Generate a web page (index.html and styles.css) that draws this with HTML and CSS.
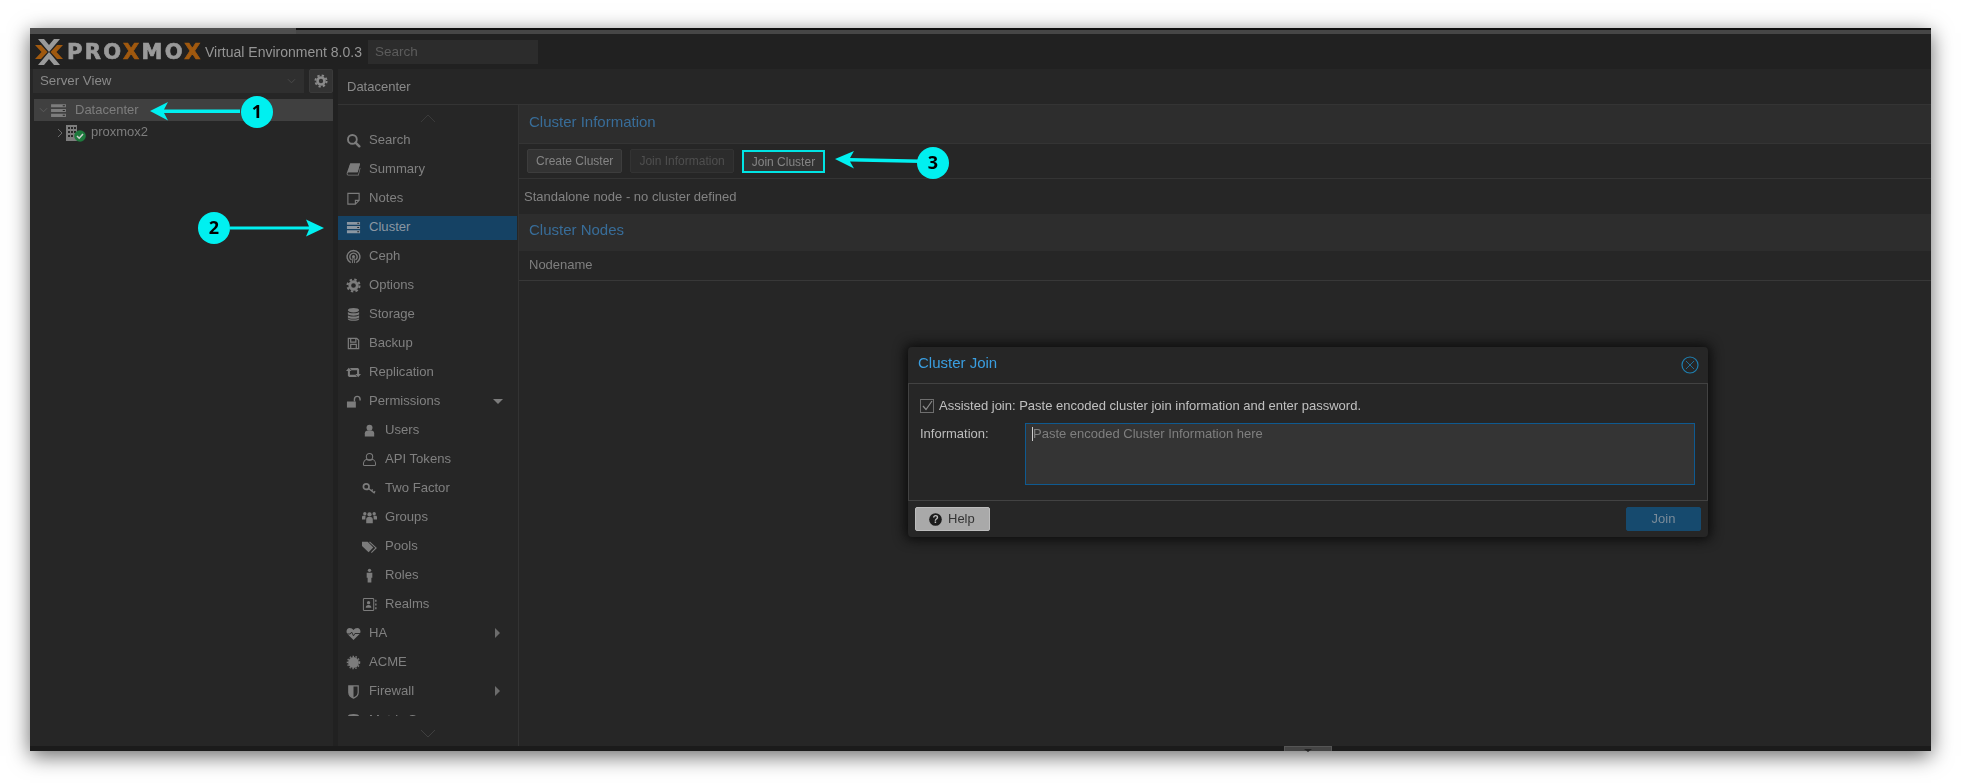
FILE: index.html
```html
<!DOCTYPE html>
<html lang="en">
<head>
<meta charset="utf-8">
<title>Proxmox Virtual Environment</title>
<link rel="stylesheet" href="styles.css">
</head>
<body>
<svg class="defs" width="0" height="0">
  <symbol id="i-search" viewBox="0 0 16 16"><circle cx="6.8" cy="6.8" r="4.7" fill="none" stroke="currentColor" stroke-width="2"/><path d="M10.2 10.2l4 4" stroke="currentColor" stroke-width="2.6" stroke-linecap="round"/></symbol>
  <symbol id="i-book" viewBox="0 0 16 16"><path d="M4.5 1.5h10.5l-2.6 9.5H2.2L1.5 12.5c0 .6.4 1 1 1h10.4l2-7.5.6.5-2 8H2.4C1 14.5 0.5 13 .8 11.8z" fill="currentColor"/><path d="M4.500 1.500h10.500l-2.600 9.500H2z" fill="currentColor"/></symbol>
  <symbol id="i-note" viewBox="0 0 16 16"><path d="M2 2.500h12v7.500l-4 4H2z M14 10h-4v4" fill="none" stroke="currentColor" stroke-width="1.200"/></symbol>
  <symbol id="i-server" viewBox="0 0 16 16"><path d="M1 2h14v3H1z M1 6.500h14v3H1z M1 11h14v3H1z" fill="currentColor"/><path d="M12 3h2v1h-2z M12 7.500h2v1h-2z M12 12h2v1h-2z" fill="#262626"/></symbol>
  <symbol id="i-ceph" viewBox="0 0 16 16"><path d="M5 14.500A6.800 6.800 0 1 1 11 14.500" fill="none" stroke="currentColor" stroke-width="1.500"/><path d="M5.900 11.600A3.900 3.900 0 1 1 10.100 11.600" fill="none" stroke="currentColor" stroke-width="1.500"/><circle cx="8" cy="8" r="1.600" fill="currentColor"/><path d="M6.800 15l.6-6h1.200l.6 6" fill="none" stroke="currentColor"/></symbol>
  <symbol id="i-gear" viewBox="0 0 16 16"><circle cx="8" cy="8" r="4" fill="none" stroke="currentColor" stroke-width="3"/><circle cx="8" cy="8" r="6.400" fill="none" stroke="currentColor" stroke-width="2.200" stroke-dasharray="2.600 2.430"/></symbol>
  <symbol id="i-db" viewBox="0 0 16 16"><ellipse cx="8" cy="3.400" rx="6" ry="2.400" fill="currentColor"/><path d="M2 5.200c1 1.800 11 1.800 12 0v2.600c-1 2-11 2-12 0z M2 8.700c1 1.800 11 1.800 12 0v2.400c-1 2-11 2-12 0z M2 11.900c1 1.800 11 1.800 12 0v1.100c-1 2.200-11 2.200-12 0z" fill="currentColor"/></symbol>
  <symbol id="i-floppy" viewBox="0 0 16 16"><path d="M2.500 2.500h9l2 2v9h-11z M5 2.500v4h5.500v-4 M5 13.500v-4.500h6v4.500" fill="none" stroke="currentColor" stroke-width="1.300"/></symbol>
  <symbol id="i-retweet" viewBox="0 0 16 16"><path d="M3 3L6 6.500H4.200V10.500H10L11.800 12.700H3.200L2 11.500V6.500H0z M13 13l-3-3.500h1.800V5.500H6L4.200 3.300h8.600L14 4.500v5h2z" fill="currentColor"/></symbol>
  <symbol id="i-unlock" viewBox="0 0 16 16"><path d="M1 8h9.500v6.500H1z" fill="currentColor"/><path d="M9 8V5.500a3 3 0 0 1 6 0V7" fill="none" stroke="currentColor" stroke-width="1.500"/></symbol>
  <symbol id="i-user" viewBox="0 0 16 16"><circle cx="8" cy="5" r="3.200" fill="currentColor"/><path d="M3 14.500V11c0-2 1.500-3 3-3h4c1.500 0 3 1 3 3v3.500z" fill="currentColor"/></symbol>
  <symbol id="i-user-o" viewBox="0 0 16 16"><circle cx="8" cy="5" r="3.400" fill="none" stroke="currentColor" stroke-width="1.100"/><path d="M3 14.500c-1 0-1.500-.5-1.500-1.500 0-2.500 1.500-5 3.500-5 1 1 5 1 6 0 2 0 3.500 2.500 3.500 5 0 1-.5 1.500-1.500 1.500z" fill="none" stroke="currentColor" stroke-width="1.100"/></symbol>
  <symbol id="i-key" viewBox="0 0 16 16"><circle cx="4.500" cy="6" r="3" fill="none" stroke="currentColor" stroke-width="1.800"/><path d="M7 8l6.500 5M10 10.500l1.500-1.500M12.500 12.500l1.500-1.500" fill="none" stroke="currentColor" stroke-width="1.500"/></symbol>
  <symbol id="i-users" viewBox="0 0 16 16"><circle cx="8" cy="4.700" r="2.300" fill="currentColor"/><circle cx="3" cy="4" r="1.800" fill="currentColor"/><circle cx="13" cy="4" r="1.800" fill="currentColor"/><path d="M4.500 14V10c0-1.500 1-2.500 2-2.500h3c1 0 2 1 2 2.500v4z M0 10V7.500C0 6.700.7 6.200 1.500 6.200h2.300L3.500 10z M16 10V7.500c0-.8-.7-1.300-1.500-1.300h-2.300l.3 3.800z" fill="currentColor"/></symbol>
  <symbol id="i-tags" viewBox="0 0 16 16"><path d="M0 3h6l6 6-5 5-7-6.500z" fill="currentColor"/><path d="M8 3l7 6.500-5 5" fill="none" stroke="currentColor" stroke-width="1.200"/></symbol>
  <symbol id="i-male" viewBox="0 0 16 16"><circle cx="8" cy="2.500" r="1.800" fill="currentColor"/><path d="M5 5h6v5.500H10v5H6v-5H5z" fill="currentColor"/></symbol>
  <symbol id="i-abook" viewBox="0 0 16 16"><rect x="1.500" y="1.500" width="11" height="13" rx="1" fill="none" stroke="currentColor" stroke-width="1.100"/><circle cx="7" cy="6" r="1.800" fill="currentColor"/><path d="M4 11.500c0-2 1-3 3-3s3 1 3 3z M14 3h1.500v2H14z M14 7h1.500v2H14z M14 11h1.500v2H14z" fill="currentColor"/></symbol>
  <symbol id="i-heart" viewBox="0 0 16 16"><path d="M8 15L1.500 8.500C-.5 6 .8 2 4 2c1.800 0 3 1 4 2.200C9 3 10.200 2 12 2c3.200 0 4.500 4 2.500 6.500z" fill="currentColor"/><path d="M0 8.500h4.500l1.500-2 2 4 1.500-2.500H16" fill="none" stroke="#262626" stroke-width="1"/></symbol>
  <symbol id="i-cert" viewBox="0 0 16 16"><circle cx="8" cy="8" r="5.800" fill="currentColor"/><circle cx="8" cy="8" r="6.500" fill="none" stroke="currentColor" stroke-width="1.400" stroke-dasharray="1.600 1.600"/></symbol>
  <symbol id="i-shield" viewBox="0 0 16 16"><path d="M3 2h10v7c0 3-2.500 5-5 6-2.500-1-5-3-5-6z" fill="none" stroke="currentColor" stroke-width="1.300"/><path d="M3 2h5v13c-2.500-1-5-3-5-6z" fill="currentColor"/></symbol>
</svg>

<div class="page">
  <div class="window">
    <div class="tabstrip"><div class="tab"></div><div class="tabrest"></div></div>

    <header class="topbar">
      <div class="logo">
        <svg class="logo-x" viewBox="0 0 28 26" aria-hidden="true">
          <path d="M3 0h6l5 6 5-6h6l-8 9.500-3 3.500-3-3.500z" fill="#9a9a9a"/>
          <path d="M3 26h6l5-6 5 6h6l-8-9.500-3-3.500-3 3.500z" fill="#9a9a9a"/>
          <path d="M0 6h6l6.500 7-6.500 7H0l6.500-7z" fill="#a0590f"/>
          <path d="M28 6h-6l-6.500 7 6.500 7h6l-6.500-7z" fill="#a0590f"/>
        </svg>
        <span class="logo-word">PRO<span class="logo-x-letter">X</span>MO<span class="logo-x-letter">X</span></span>
      </div>
      <span class="version">Virtual Environment 8.0.3</span>
      <div class="searchbox">Search</div>
    </header>

    <div class="content">
      <aside class="sidebar">
        <div class="viewrow">
          <div class="viewselect"><span>Server View</span>
            <svg class="chev" viewBox="0 0 10 6"><path d="M1 1l4 4 4-4" fill="none" stroke="#4d4d4d"/></svg>
          </div>
          <div class="gearbtn"><svg class="ic"><use href="#i-gear"/></svg></div>
        </div>
        <div class="tree">
          <div class="treerow selected">
            <svg class="chev tree-chev" viewBox="0 0 10 6"><path d="M1 1l4 4 4-4" fill="none" stroke="#5f5f5f"/></svg>
            <svg class="tree-ic"><use href="#i-server"/></svg>
            <span>Datacenter</span>
          </div>
          <div class="treerow child">
            <svg class="chev-r" viewBox="0 0 6 10"><path d="M1 1l4 4-4 4" fill="none" stroke="#6a6a6a"/></svg>
            <span class="nodeicon">
              <svg viewBox="0 0 14 16" class="building"><path d="M0 0h11v16H0z" fill="#7d7d7d"/><path d="M2 2h2v2H2z M5 2h2v2H5z M8 2h2v2H8z M2 6h2v2H2z M5 6h2v2H5z M8 6h2v2H8z M2 10h2v2H2z M5 10h2v2H5z" fill="#262626"/></svg>
              <svg viewBox="0 0 12 12" class="okbadge"><circle cx="6" cy="6" r="5.800" fill="#1d7a3d"/><path d="M3 6l2.200 2.200L9 4" fill="none" stroke="#d0d0d0" stroke-width="1.500"/></svg>
            </span>
            <span>proxmox2</span>
          </div>
        </div>
      </aside>
      <div class="splitter"></div>

      <main class="main">
        <div class="crumb">Datacenter</div>
        <div class="mainrow">
          <nav class="nav">
            <div class="scroll-up"><svg viewBox="0 0 16 8"><path d="M1 8l7-7 7 7" fill="none" stroke="#3a3a3a"/></svg></div>
            <ul class="navlist">
              <li class="navitem"><svg class="ic"><use href="#i-search"/></svg>Search</li>
              <li class="navitem"><svg class="ic"><use href="#i-book"/></svg>Summary</li>
              <li class="navitem"><svg class="ic"><use href="#i-note"/></svg>Notes</li>
              <li class="navitem active"><svg class="ic"><use href="#i-server"/></svg>Cluster</li>
              <li class="navitem"><svg class="ic"><use href="#i-ceph"/></svg>Ceph</li>
              <li class="navitem"><svg class="ic"><use href="#i-gear"/></svg>Options</li>
              <li class="navitem"><svg class="ic"><use href="#i-db"/></svg>Storage</li>
              <li class="navitem"><svg class="ic"><use href="#i-floppy"/></svg>Backup</li>
              <li class="navitem"><svg class="ic"><use href="#i-retweet"/></svg>Replication</li>
              <li class="navitem"><svg class="ic"><use href="#i-unlock"/></svg>Permissions<span class="tri-down"></span></li>
              <li class="navitem sub"><svg class="ic"><use href="#i-user"/></svg>Users</li>
              <li class="navitem sub"><svg class="ic"><use href="#i-user-o"/></svg>API Tokens</li>
              <li class="navitem sub"><svg class="ic"><use href="#i-key"/></svg>Two Factor</li>
              <li class="navitem sub"><svg class="ic"><use href="#i-users"/></svg>Groups</li>
              <li class="navitem sub"><svg class="ic"><use href="#i-tags"/></svg>Pools</li>
              <li class="navitem sub"><svg class="ic"><use href="#i-male"/></svg>Roles</li>
              <li class="navitem sub"><svg class="ic"><use href="#i-abook"/></svg>Realms</li>
              <li class="navitem"><svg class="ic"><use href="#i-heart"/></svg>HA<span class="tri-right"></span></li>
              <li class="navitem"><svg class="ic"><use href="#i-cert"/></svg>ACME</li>
              <li class="navitem"><svg class="ic"><use href="#i-shield"/></svg>Firewall<span class="tri-right"></span></li>
              <li class="navitem"><svg class="ic"><use href="#i-db"/></svg>Metric Server</li>
            </ul>
            <div class="scroll-down"><svg viewBox="0 0 16 8"><path d="M1 0l7 7 7-7" fill="none" stroke="#3f3f3f"/></svg></div>
          </nav>

          <section class="panel">
            <h2 class="panelhead">Cluster Information</h2>
            <div class="toolbar">
              <button class="btn">Create Cluster</button>
              <button class="btn disabled">Join Information</button>
              <button class="btn highlighted">Join Cluster</button>
            </div>
            <div class="standalone">Standalone node - no cluster defined</div>
            <h2 class="panelhead second">Cluster Nodes</h2>
            <div class="gridhead">Nodename</div>
          </section>
        </div>
      </main>
    </div>

    <div class="footerbar"><div class="toggler"><span class="toggler-tri"></span></div></div>
  </div>

  <div class="modal">
    <div class="modalhead">
      <span class="modaltitle">Cluster Join</span>
      <svg class="closeic" viewBox="0 0 18 18"><circle cx="9" cy="9" r="8" fill="none" stroke="#1f7fb0" stroke-width="1.200"/><path d="M5 5l8 8M13 5l-8 8" stroke="#1f6f9a" stroke-width="1"/></svg>
    </div>
    <div class="modalbody">
      <div class="checkrow">
        <svg class="checkbox" viewBox="0 0 14 14"><rect x=".5" y=".5" width="13" height="13" fill="none" stroke="#6e6e6e"/><path d="M3 7l3 3.500L12 2" fill="none" stroke="#8c8c8c" stroke-width="1.200"/></svg>
        <span>Assisted join: Paste encoded cluster join information and enter password.</span>
      </div>
      <div class="inforow">
        <label class="infolabel">Information:</label>
        <div class="areawrap">
          <textarea class="infoarea" readonly placeholder="Paste encoded Cluster Information here"></textarea>
          <span class="caret"></span>
        </div>
      </div>
    </div>
    <div class="modalfoot">
      <button class="helpbtn">
        <svg class="helpic" viewBox="0 0 14 14"><circle cx="7" cy="7" r="6.800" fill="#1c1c1c"/><text x="7" y="10.800" class="helpq">?</text></svg>
        Help
      </button>
      <button class="joinbtn">Join</button>
    </div>
  </div>

  <svg class="annot" viewBox="0 0 1961 783" aria-hidden="true">
    <g fill="#00f0f0" stroke="none">
      <path d="M150 111l18-9-4 7.500h76v3.500h-76l4 7.500z"/>
      <circle cx="257" cy="112" r="16"/>
      <path d="M230 226.500h79l-3-7 18 8.500-18 8.500 3-7h-79z"/>
      <circle cx="214" cy="228" r="16"/>
      <path d="M835 159l19-8-4 7 70 1.500v3.500l-70-1.500 4 7z"/>
      <circle cx="933" cy="163" r="16"/>
    </g>
    <text x="257" y="118" class="num">1</text>
    <text x="214" y="234" class="num">2</text>
    <text x="933" y="169" class="num">3</text>
  </svg>
</div>
</body>
</html>
```
FILE: styles.css
```css
* { box-sizing: border-box; }
html, body { margin: 0; padding: 0; background: #fff; }
body { width: 1961px; height: 783px; overflow: hidden; font-family: "Liberation Sans", Arial, sans-serif; font-size: 13px; color: #8c8c8c; }
.defs { position: absolute; }

.page { position: relative; width: 1961px; height: 783px; padding: 28px 30px 32px; filter: blur(0.4px); }
.window { width: 1901px; height: 723px; display: flex; flex-direction: column; background: #262626; box-shadow: 0 5px 20px rgba(0,0,0,.6); }

.tabstrip { display: flex; height: 6px; flex: none; }
.tab { width: 266px; background: #4e4e4e; }
.tabrest { flex: 1; background: #464646; border-top: 2px solid #111; }

.topbar { display: flex; align-items: center; height: 35px; flex: none; background: #212121; padding-left: 5px; }
.logo { display: flex; align-items: center; width: 170px; flex: none; }
.logo-x { width: 28px; height: 26px; flex: none; }
.logo-word { margin-left: 4px; font-family: "DejaVu Sans", sans-serif; font-weight: 700; font-size: 21px; letter-spacing: 2.400px; color: #9a9a9a; -webkit-text-stroke: .7px currentColor; line-height: 22px; white-space: nowrap; }
.logo-x-letter { color: #a0590f; }
.version { font-size: 14px; color: #959595; width: 163px; flex: none; white-space: nowrap; }
.searchbox { width: 170px; height: 24px; margin-top: 1px; background: #2c2c2c; color: #5c5c5c; padding: 0 7px; line-height: 24px; font-size: 13.500px; }

.content { flex: 1; display: flex; min-height: 0; }
.sidebar { width: 303px; flex: none; padding-left: 3px; }
.splitter { width: 5px; flex: none; background: #212121; }
.viewrow { display: flex; gap: 5px; height: 24px; }
.viewselect { flex: 1; display: flex; align-items: center; justify-content: space-between; background: #2f2f2f; padding: 0 8px 1px 7px; color: #8a8a8a; font-size: 13.300px; }
.chev { width: 9px; height: 6px; }
.gearbtn { width: 24px; background: #333; border: 1px solid #3a3a3a; border-radius: 2px; display: flex; align-items: center; justify-content: center; color: #8a8a8a; }
.gearbtn .ic { width: 14px; height: 14px; }
.tree { margin-top: 6px; padding-left: 1px; }
.treerow { display: flex; align-items: center; height: 22px; color: #7d7d7d; font-size: 13px; }
.treerow span { padding-bottom: 2px; }
.treerow.selected { background: #404040; }
.tree-chev { margin-left: 5px; }
.tree-ic { width: 17px; height: 17px; margin: 0 8px 0 2px; color: #7d7d7d; }
.treerow.child { padding-left: 23px; height: 23px; }
.chev-r { width: 6px; height: 10px; margin-right: 3px; }
.nodeicon { position: relative; width: 17px; height: 18px; margin: 2px 8px 0 0; padding: 0 !important; display: block; }
.building { position: absolute; left: 0; top: 0; width: 14px; height: 16px; }
.okbadge { position: absolute; left: 8px; top: 5px; width: 12px; height: 12px; }

.main { flex: 1; min-width: 0; display: flex; flex-direction: column; }
.crumb { height: 36px; flex: none; padding: 10px 9px 0; border-bottom: 1px solid #343434; color: #8a8a8a; font-size: 13px; }
.mainrow { flex: 1; display: flex; min-height: 0; }

.nav { width: 181px; flex: none; position: relative; border-right: 1px solid #333; }
.scroll-up, .scroll-down { position: absolute; left: 82px; width: 16px; height: 8px; }
.scroll-up { top: 9px; }
.scroll-down { top: 625px; }
.scroll-up svg, .scroll-down svg { display: block; width: 16px; height: 8px; }
.navlist { list-style: none; margin: 0; padding: 0; position: absolute; left: 0; right: 1px; top: 24px; height: 587px; overflow: hidden; }
.navitem { display: flex; align-items: flex-start; position: relative; height: 24px; margin-bottom: 5px; padding-left: 31px; line-height: 22px; color: #808080; white-space: nowrap; font-size: 13.100px; }
.navitem .ic { position: absolute; left: 8px; top: 4px; width: 15px; height: 15px; color: #7c7c7c; }
.navitem.sub { padding-left: 47px; }
.navitem.sub .ic { left: 24px; }
.navitem.active { background: #154264; color: #8b97a2; }
.navitem.active .ic { color: #8b97a2; }
.tri-down { position: absolute; left: 155px; top: 9px; border: 5px solid transparent; border-top: 5px solid #7c7c7c; border-bottom: 0; }
.tri-right { position: absolute; left: 157px; top: 6px; border: 5px solid transparent; border-left: 5px solid #6c6c6c; border-right: 0; }

.panel { flex: 1; min-width: 0; }
.panelhead { margin: 0; height: 38px; background: #2d2d2d; color: #386d99; font-weight: 400; font-size: 15px; padding: 7px 0 0 10px; line-height: 20px; }
.toolbar { height: 36px; display: flex; gap: 8px; align-items: flex-start; padding: 5px 0 0 8px; border-top: 1px solid #343434; border-bottom: 1px solid #343434; }
.btn { height: 24px; padding: 0 8px; background: #333; border: 1px solid #3d3d3d; border-radius: 2px; font: 12px "Liberation Sans", sans-serif; color: #858585; }
.btn.disabled { background: #2c2c2c; border-color: #333; color: #4f4f4f; }
.btn.highlighted { border: 2px solid #00e4e4; border-radius: 0; margin-top: 1px; height: 23px; padding: 0 8px; background: #333; }
.standalone { height: 35px; padding: 8px 0 0 5px; font-size: 13px; line-height: 20px; color: #828282; }
.panelhead.second { height: 37px; padding-top: 6px; }
.gridhead { height: 30px; border-bottom: 1px solid #383838; padding: 4px 0 0 10px; line-height: 20px; color: #7f7f7f; }

.footerbar { height: 5px; flex: none; background: #1b1b1b; position: relative; display: flex; justify-content: flex-start; padding-left: 1254px; }
.toggler { width: 48px; height: 5px; background: #444; border: 1px solid #555; border-bottom: 0; display: flex; justify-content: center; }
.toggler-tri { margin-top: 2px; border: 4px solid transparent; border-top: 3px solid #222; border-bottom: 0; height: 0; }

.modal { position: absolute; left: 908px; top: 347px; width: 800px; height: 190px; background: #262626; border-radius: 4px; box-shadow: 0 0 12px 3px #0c0c0c; display: flex; flex-direction: column; }
.modalhead { height: 36px; flex: none; display: flex; align-items: center; justify-content: space-between; padding: 0 9px 5px 10px; }
.modaltitle { color: #3a9ee0; font-size: 15px; }
.closeic { width: 18px; height: 18px; margin-top: 5px; }
.modalbody { height: 118px; flex: none; border: 1px solid #424242; padding: 12px 12px 0 11px; color: #bdbdbd; }
.checkrow { display: flex; align-items: center; gap: 5px; height: 18px; font-size: 13px; color: #c0c0c0; }
.checkbox { width: 14px; height: 14px; flex: none; margin-top: 2px; }
.inforow { display: flex; margin-top: 9px; }
.infolabel { width: 105px; flex: none; padding-top: 2px; line-height: 18px; color: #bdbdbd; font-size: 13px; }
.areawrap { flex: 1; position: relative; height: 62px; }
.infoarea { display: block; width: 100%; height: 62px; resize: none; background: #343434; border: 1px solid #0f5a90; border-radius: 0; padding: 2px 7px; font: 13px/16px "Liberation Sans", sans-serif; color: #bbb; outline: 0; overflow: hidden; }
.infoarea::placeholder { color: #7f7f7f; opacity: 1; }
.caret { position: absolute; left: 7px; top: 4px; width: 1px; height: 14px; background: #cfcfcf; }
.modalfoot { flex: 1; display: flex; justify-content: space-between; padding: 6px 7px 0; }
.helpbtn { display: flex; align-items: center; gap: 6px; width: 75px; height: 24px; padding: 0 0 2px 13px; background: #a9a9a9; border: 1px solid #bcbcbc; border-radius: 2px; color: #333; font: 13px "Liberation Sans", sans-serif; }
.helpic { width: 13px; height: 13px; margin-top: 2px; }
.helpq { font: 700 11px "Liberation Sans", sans-serif; fill: #bdbdbd; text-anchor: middle; }
.joinbtn { width: 75px; height: 24px; padding: 0 0 2px; background: #164a6e; border: 1px solid #164a6e; border-radius: 2px; color: #7a8b99; font: 13px "Liberation Sans", sans-serif; }

.annot { position: absolute; left: 0; top: 0; width: 1961px; height: 783px; pointer-events: none; }
.num { font: 700 18px "Noto Sans", "Liberation Sans", sans-serif; fill: #000; text-anchor: middle; }
```
